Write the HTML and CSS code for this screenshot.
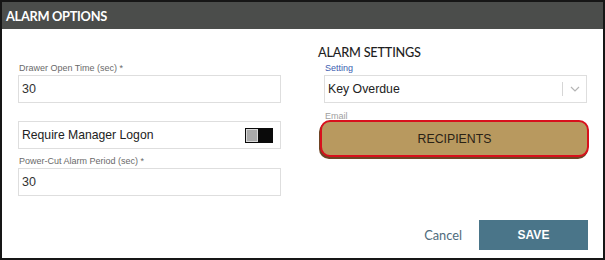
FILE: index.html
```html
<!DOCTYPE html>
<html lang="en">
<head>
  <meta charset="UTF-8" />
  <title>Alarm Options</title>
  <link rel="stylesheet" href="styles.css">
</head>
<body>

  <div class="dialog">
    <!-- Header -->
    <div class="dialog-header">ALARM OPTIONS</div>

    <div class="dialog-body">
      <!-- Left column -->
      <div class="col col-left">
        <div class="field">
          <label>Drawer Open Time (sec) *</label>
          <div class="input">30</div>
        </div>

        <div class="toggle-row">
          <span>Require Manager Logon</span>
          <div class="toggle"><div class="knob"></div></div>
        </div>

        <div class="field">
          <label>Power-Cut Alarm Period (sec) *</label>
          <div class="input">30</div>
        </div>
      </div>

      <!-- Right column -->
      <div class="col col-right">
        <h3>ALARM SETTINGS</h3>
        <div class="field">
          <label class="blue">Setting</label>
          <div class="select">
            <span>Key Overdue</span>
            <div class="select-arrow">
              <svg width="10" height="6" viewBox="0 0 10 6"><path d="M1 1 L5 5 L9 1" fill="none" stroke="#b5b5b5" stroke-width="1.2"/></svg>
            </div>
          </div>
        </div>
        <label class="email-label">Email</label>
        <button class="recipients-btn">RECIPIENTS</button>
      </div>
    </div>

    <!-- Footer -->
    <div class="dialog-footer">
      <span class="cancel">Cancel</span>
      <button class="save-btn">SAVE</button>
    </div>
  </div>

</body>
</html>
```

FILE: styles.css
```css
* { margin: 0; padding: 0; box-sizing: border-box; }

body {
  width: 605px;
  height: 260px;
  background: #fff;
  font-family: "Liberation Sans", Arial, sans-serif;
  overflow: hidden;
}

.dialog {
  width: 605px;
  height: 260px;
  border: 2px solid #161616;
  display: flex;
  flex-direction: column;
}

.dialog-header {
  height: 27px;
  background-color: #4b4d4b;
  color: #fff;
  font-family: Lato, sans-serif;
  font-weight: bold;
  font-size: 12.8px;
  letter-spacing: -0.3px;
  display: flex;
  align-items: center;
  padding-left: 4px;
}

.dialog-body {
  display: flex;
  gap: 37px;
  padding: 13px 16px 0 16px;
}

.col-left {
  width: 263px;
  padding-top: 20px;
}

.col-right {
  width: 269px;
}

.field label {
  display: block;
  font-size: 9px;
  color: #6a6a6a;
  height: 13px;
  line-height: 12px;
  padding-left: 1px;
}

.field label.blue {
  color: #3b5db0;
}

.input {
  height: 28px;
  border: 1px solid #dedede;
  font-size: 12.5px;
  color: #333;
  padding-left: 3px;
  line-height: 26px;
}

.toggle-row {
  height: 28px;
  margin: 18px 0 6px;
  border: 1px solid #dedede;
  display: flex;
  align-items: center;
  justify-content: space-between;
  padding: 0 7px 0 3px;
  font-size: 12.2px;
  color: #222;
}

.toggle {
  width: 28px;
  height: 15px;
  background: #0a0a0a;
  padding: 1px;
}

.knob {
  width: 12px;
  height: 13px;
  background: #a9a9a9;
  border: 1px solid #d8d8d8;
}

.col-right h3 {
  font-family: Lato, sans-serif;
  font-weight: 500;
  font-size: 12.7px;
  color: #1f1f1f;
  letter-spacing: -0.2px;
  height: 20px;
  line-height: 16px;
  padding-top: 2px;
}

.col-right .field {
  margin-left: 6px;
}

.select {
  height: 28px;
  border: 1px solid #dedede;
  display: flex;
  align-items: center;
  justify-content: space-between;
  font-size: 12.3px;
  color: #222;
  padding-left: 3px;
}

.select-arrow {
  height: 14px;
  width: 24px;
  border-left: 1px solid #d6d6d6;
  display: flex;
  align-items: center;
  justify-content: center;
}

.email-label {
  display: block;
  margin: 7px 0 0 7px;
  font-size: 9px;
  color: #a0a0a0;
  height: 10px;
  line-height: 12px;
}

.recipients-btn {
  display: block;
  width: 269px;
  height: 37px;
  margin-left: 2px;
  background-color: #b8995f;
  border: 2px solid #d8101c;
  border-radius: 10px;
  box-shadow: -1px 2px 0 #6e4424;
  font-family: "Liberation Sans", Arial, sans-serif;
  font-size: 12.3px;
  color: #2a2215;
}

.dialog-footer {
  margin-top: auto;
  display: flex;
  justify-content: flex-end;
  align-items: center;
  gap: 17px;
  padding: 0 15px 8px 0;
}

.cancel {
  font-family: Lato, sans-serif;
  font-size: 12.8px;
  color: #4f6b7c;
}

.save-btn {
  width: 109px;
  height: 30px;
  background-color: #4a7589;
  border: none;
  color: #fff;
  font-family: "Liberation Sans", Arial, sans-serif;
  font-weight: bold;
  font-size: 12px;
}
```
